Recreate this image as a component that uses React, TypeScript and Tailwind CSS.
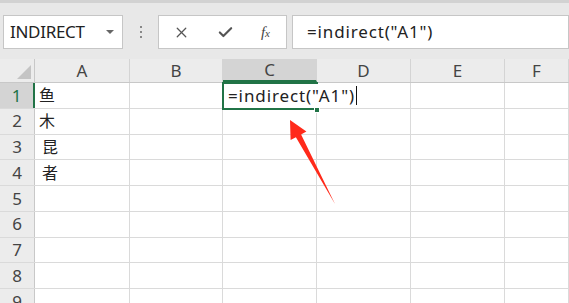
import { X, Check } from "lucide-react";

const cols = [
  { label: "A", w: "w-[95px]" },
  { label: "B", w: "w-[93px]" },
  { label: "C", w: "w-[94px]" },
  { label: "D", w: "w-[94px]" },
  { label: "E", w: "w-[94px]" },
  { label: "F", w: "w-[64px]" },
];

const cellA: Record<number, string> = { 1: "鱼", 2: "木", 3: "昆", 4: "者" };

const font = "font-['Noto_Sans','Noto_Sans_CJK_SC',sans-serif]";

export default function App() {
  const rows = [1, 2, 3, 4, 5, 6, 7, 8, 9];
  return (
    <div className={`relative w-[569px] h-[303px] overflow-hidden bg-white text-[#222] ${font}`}>
      {/* formula bar */}
      <div className="h-[59px] bg-[#e8e8e8] border-t-[3px] border-[#d2d2d2] flex items-start pt-[12px] pl-[3px]">
        <div className="w-[120px] h-[34px] bg-white border border-[#c6c6c6] flex items-center justify-between pl-[6px] pr-[8px]">
          <span className="text-[17px] tracking-[-0.3px]">INDIRECT</span>
          <span className="w-0 h-0 border-l-[4px] border-r-[4px] border-t-[4px] border-l-transparent border-r-transparent border-t-[#666]" />
        </div>
        <div className="w-[35px] h-[34px] flex flex-col items-center justify-center gap-[3px]">
          <span className="w-[2px] h-[2px] bg-[#888]" />
          <span className="w-[2px] h-[2px] bg-[#888]" />
          <span className="w-[2px] h-[2px] bg-[#888]" />
        </div>
        <div className="w-[129px] h-[34px] bg-white border border-[#c6c6c6] flex items-center justify-between pl-[14px] pr-[16px]">
          <X className="w-[17px] h-[17px] text-[#555]" strokeWidth={1.8} />
          <Check className="w-[17px] h-[17px] text-[#555]" strokeWidth={3} />
          <span className="font-['Liberation_Serif',serif] italic text-[15px] text-[#444]">
            f<span className="text-[11px]">x</span>
          </span>
        </div>
        <div className="ml-[5px] flex-1 h-[34px] bg-white border border-[#c6c6c6] flex items-center pl-[14px]">
          <span className="text-[17px] tracking-[0.85px]">=indirect("A1")</span>
        </div>
      </div>

      {/* column headers */}
      <div className="flex h-[24px] bg-[#ececec] border-b border-[#c8c8c8]">
        <div className="w-[35px] border-r border-[#c8c8c8] flex items-end justify-end pr-[3px] pb-[3px]">
          <svg width="14" height="14">
            <polygon points="14,0 14,14 0,14" fill="#c4c4c4" />
          </svg>
        </div>
        {cols.map((c) => (
          <div
            key={c.label}
            className={`${c.w} shrink-0 border-r border-[#d4d4d4] flex items-center justify-center text-[17px] text-[#444] ${
              c.label === "C" ? "bg-[#d4d4d4] border-b-2 border-b-[#217346]" : ""
            }`}
          >
            {c.label}
          </div>
        ))}
      </div>

      {/* rows */}
      {rows.map((r) => (
        <div key={r} className="flex h-[25.75px] border-b border-[#dadada]">
          <div
            className={`w-[35px] shrink-0 flex items-center justify-center text-[17px] border-r ${
              r === 1
                ? "bg-[#d4d4d4] text-[#217346] border-r-2 border-r-[#217346]"
                : "bg-[#ececec] text-[#444] border-[#c8c8c8]"
            }`}
          >
            {r}
          </div>
          {cols.map((c) => (
            <div
              key={c.label}
              className={`${c.w} shrink-0 border-r border-[#dadada] flex items-center ${
                c.label === "C" && r === 1 ? "relative z-20 border-r-0" : ""
              }`}
            >
              {c.label === "A" && cellA[r] && (
                <span className={`text-[16px] ${r >= 3 ? "pl-[7px]" : "pl-[4px]"}`}>{cellA[r]}</span>
              )}
              {c.label === "C" && r === 1 && (
                <span className="pl-[5px] text-[17px] tracking-[0.9px] whitespace-nowrap flex items-center">
                  =indirect("A1")
                  <span className="inline-block w-[1px] h-[19px] bg-[#111] ml-[1px]" />
                </span>
              )}
            </div>
          ))}
        </div>
      ))}

      {/* selection outline on C1 (right edge hidden while editing) */}
      <div className="absolute z-10 left-[222px] top-[82px] w-[96px] h-[28px] border-2 border-r-0 border-[#217346] pointer-events-none" />
      <div className="absolute z-10 left-[314px] top-[107px] w-[6px] h-[6px] bg-[#217346] border border-white" />

      {/* red annotation arrow */}
      <svg className="absolute z-30 left-0 top-0 pointer-events-none" width="569" height="303">
        <polygon
          points="290,120 306.4,131.6 301.1,134.5 335,204 295.9,137.3 290.6,140.1"
          fill="#ff2a1a"
        />
      </svg>
    </div>
  );
}
